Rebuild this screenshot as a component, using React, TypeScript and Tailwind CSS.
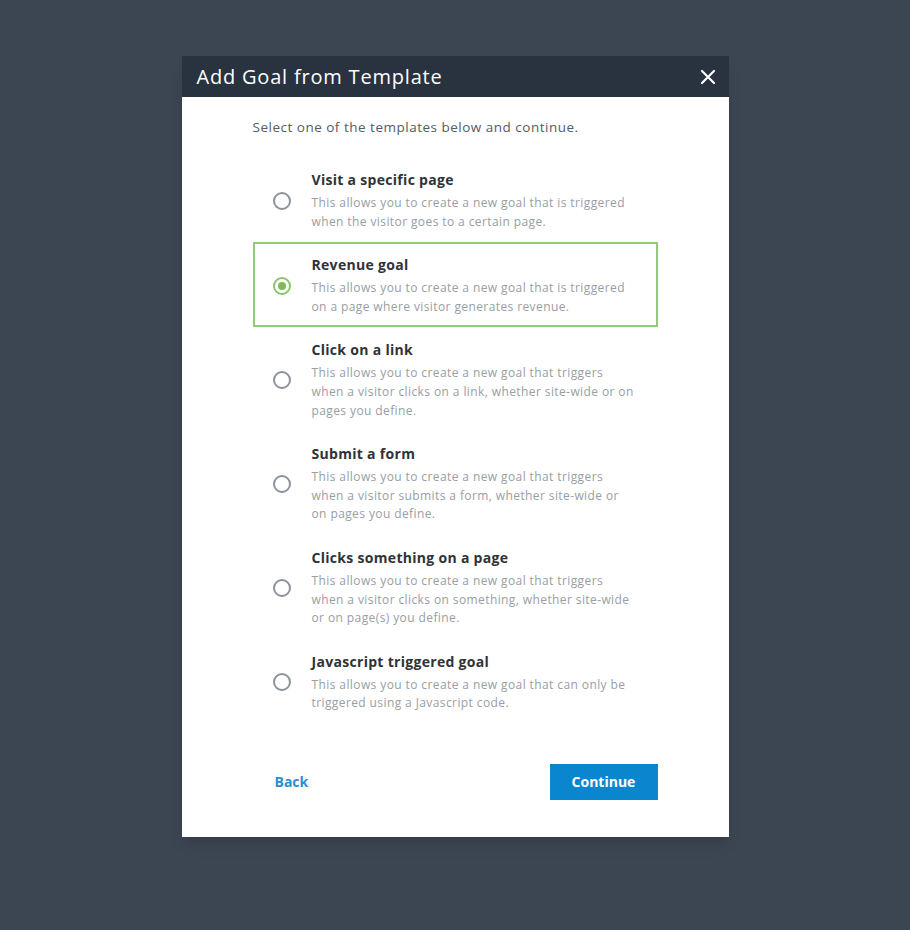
import React, { useState } from "react";

const templates = [
  {
    title: "Visit a specific page",
    desc: "This allows you to create a new goal that is triggered when the visitor goes to a certain page.",
  },
  {
    title: "Revenue goal",
    desc: "This allows you to create a new goal that is triggered on a page where visitor generates revenue.",
  },
  {
    title: "Click on a link",
    desc: "This allows you to create a new goal that triggers when a visitor clicks on a link, whether site-wide or on pages you define.",
  },
  {
    title: "Submit a form",
    desc: "This allows you to create a new goal that triggers when a visitor submits a form, whether site-wide or on pages you define.",
  },
  {
    title: "Clicks something on a page",
    desc: "This allows you to create a new goal that triggers when a visitor clicks on something, whether site-wide or on page(s) you define.",
  },
  {
    title: "Javascript triggered goal",
    desc: "This allows you to create a new goal that can only be triggered using a Javascript code.",
  },
];

function Radio({ checked }: { checked: boolean }) {
  return checked ? (
    <span className="flex h-[18px] w-[18px] shrink-0 items-center justify-center rounded-full border-2 border-[#8cc46c]">
      <span className="h-[8px] w-[8px] rounded-full bg-[#7dbb57]" />
    </span>
  ) : (
    <span className="h-[18px] w-[18px] shrink-0 rounded-full border-2 border-[#8b939b]" />
  );
}

export default function App() {
  const [selected, setSelected] = useState(1);

  return (
    <div
      className="flex min-h-[930px] w-full justify-center bg-[#3c4552] pt-[56px]"
      style={{ fontFamily: '"Open Sans", "Noto Sans", sans-serif' }}
    >
      <div className="h-[781px] w-[547px] bg-white shadow-lg">
        {/* header */}
        <div className="flex h-[41px] items-center justify-between bg-[#29323f] pl-[15px] pr-[12px]">
          <h1 className="text-[20px] tracking-[0.8px] text-white">Add Goal from Template</h1>
          <svg width="16" height="16" viewBox="0 0 16 16" className="mr-[1px]">
            <path d="M2 2 L14 14 M14 2 L2 14" stroke="white" strokeWidth="2.2" strokeLinecap="round" />
          </svg>
        </div>

        <div className="px-[71px] pt-[21px]">
          <p className="text-[13.5px] leading-[18px] tracking-[0.5px] text-[#555b61]">
            Select one of the templates below and continue.
          </p>

          <div className="mt-[21px] flex flex-col">
            {templates.map((t, i) => (
              <button
                key={t.title}
                onClick={() => setSelected(i)}
                className={`flex items-center gap-[21px] border-2 pb-[9px] pl-[18px] pr-[16px] pt-[11px] text-left ${
                  selected === i ? "border-[#94c87a]" : "border-transparent"
                }`}
              >
                <Radio checked={selected === i} />
                <div className="max-w-[326px]">
                  <div className="text-[14px] font-bold leading-[20px] tracking-[0.3px] text-[#2f3338]">
                    {t.title}
                  </div>
                  <div className="mt-[4px] text-[12px] leading-[18.6px] tracking-[0.4px] text-[#979ea5]">
                    {t.desc}
                  </div>
                </div>
              </button>
            ))}
          </div>

          <div className="mt-[40px] flex items-center justify-between">
            <button className="pl-[22px] text-[14px] font-bold text-[#2b8fd0]">Back</button>
            <button className="h-[36px] w-[108px] bg-[#0a86cf] text-[14px] font-bold text-white">
              Continue
            </button>
          </div>
        </div>
      </div>
    </div>
  );
}
